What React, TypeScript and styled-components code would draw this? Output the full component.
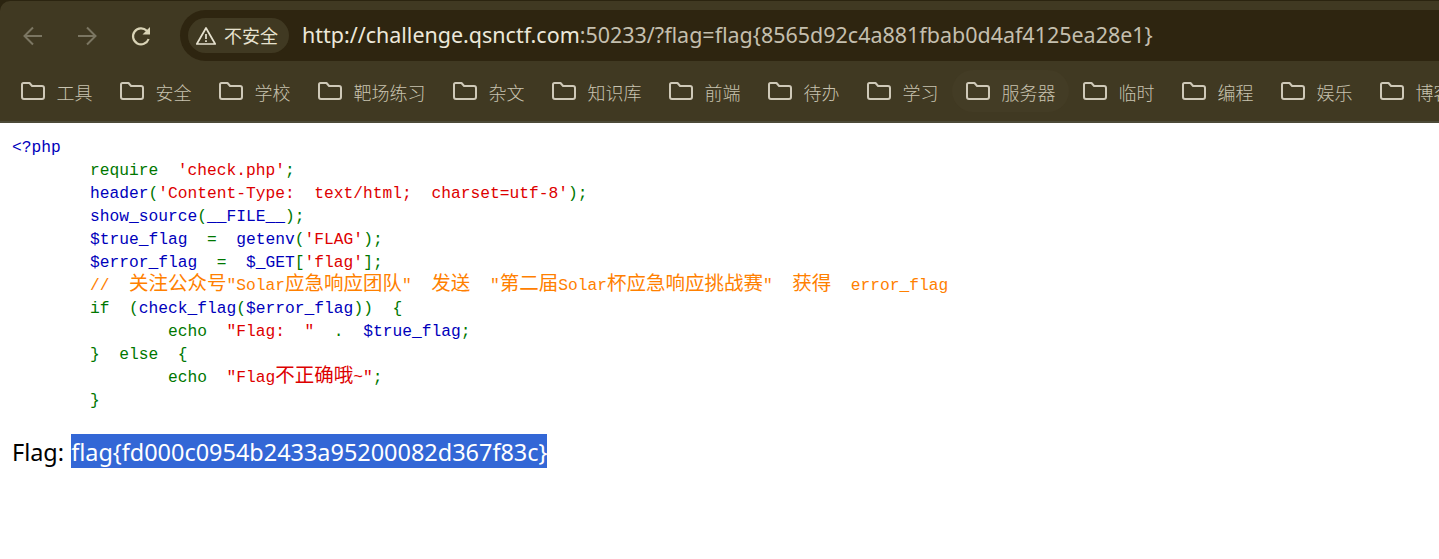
import React, { FC } from "react";
import styled, { createGlobalStyle } from "styled-components";

const GlobalStyle = createGlobalStyle`
  html, body {
    margin: 0;
    padding: 0;
    background: #ffffff;
    overflow: hidden;
  }
`;

const BOOKMARKS = [
  "工具",
  "安全",
  "学校",
  "靶场练习",
  "杂文",
  "知识库",
  "前端",
  "待办",
  "学习",
  "服务器",
  "临时",
  "编程",
  "娱乐",
  "博客",
];

const App: FC = () => {
  return (
    <>
      <GlobalStyle />
      <Page>
        <Chrome>
          <Toolbar>
            <NavButtons>
              <NavButton>
                <svg width="24" height="24" viewBox="0 0 24 24" fill="none" stroke="#7b7662" strokeWidth="2">
                  <path d="M21 12H4M12 3.5L3.5 12l8.5 8.5" />
                </svg>
              </NavButton>
              <NavButton>
                <svg width="24" height="24" viewBox="0 0 24 24" fill="none" stroke="#7b7662" strokeWidth="2">
                  <path d="M3 12h17M12 3.5l8.5 8.5-8.5 8.5" />
                </svg>
              </NavButton>
              <NavButton>
                <svg width="24" height="24" viewBox="0 0 24 24" fill="none" stroke="#d9d3b6">
                  <path d="M19.6 15a8 8 0 1 1-1.8-8.2L20 9" strokeWidth="2.2" />
                  <path d="M21 3v7.5h-7.5z" fill="#d9d3b6" stroke="none" />
                </svg>
              </NavButton>
            </NavButtons>
            <Omnibox>
              <SecurityChip>
                <svg width="22" height="22" viewBox="0 0 22 22" fill="none" stroke="#e6e1cf" strokeWidth="1.7">
                  <path d="M11 3L20.2 19H1.8L11 3Z" strokeLinejoin="round" />
                  <path d="M11 9v5M11 15.2v1.8" />
                </svg>
                <ChipLabel>不安全</ChipLabel>
              </SecurityChip>
              <Url>
                http://challenge.qsnctf.com
                <UrlPath>:50233/?flag=flag{"{"}8565d92c4a881fbab0d4af4125ea28e1{"}"}</UrlPath>
              </Url>
            </Omnibox>
          </Toolbar>
          <BookmarkBar>
            {BOOKMARKS.map((name) => (
              <Bookmark key={name} $hover={name === "服务器"}>
                <svg width="24" height="20" viewBox="0 0 24 20" fill="none" stroke="#cfc9b8" strokeWidth="2">
                  <path d="M1 3.5A1.5 1.5 0 0 1 2.5 2h6l2.6 3h9.9A2 2 0 0 1 23 7v9a2 2 0 0 1-2 2H3a2 2 0 0 1-2-2z" strokeLinejoin="round" />
                </svg>
                <BookmarkLabel>{name}</BookmarkLabel>
              </Bookmark>
            ))}
          </BookmarkBar>
        </Chrome>
        <Content>
          <Code>
            <CodeLine>
              <Tok $c="#0000bb">&lt;?php</Tok>
            </CodeLine>
            <CodeLine $indent={1}>
              <Tok $c="#007700">require{"\u00a0\u00a0"}</Tok>
              <Tok $c="#dd0000">'check.php'</Tok>
              <Tok $c="#007700">;</Tok>
            </CodeLine>
            <CodeLine $indent={1}>
              <Tok $c="#0000bb">header</Tok>
              <Tok $c="#007700">(</Tok>
              <Tok $c="#dd0000">'Content-Type:{"\u00a0\u00a0"}text/html;{"\u00a0\u00a0"}charset=utf-8'</Tok>
              <Tok $c="#007700">);</Tok>
            </CodeLine>
            <CodeLine $indent={1}>
              <Tok $c="#0000bb">show_source</Tok>
              <Tok $c="#007700">(</Tok>
              <Tok $c="#0000bb">__FILE__</Tok>
              <Tok $c="#007700">);</Tok>
            </CodeLine>
            <CodeLine $indent={1}>
              <Tok $c="#0000bb">$true_flag{"\u00a0\u00a0"}</Tok>
              <Tok $c="#007700">={"\u00a0\u00a0"}</Tok>
              <Tok $c="#0000bb">getenv</Tok>
              <Tok $c="#007700">(</Tok>
              <Tok $c="#dd0000">'FLAG'</Tok>
              <Tok $c="#007700">);</Tok>
            </CodeLine>
            <CodeLine $indent={1}>
              <Tok $c="#0000bb">$error_flag{"\u00a0\u00a0"}</Tok>
              <Tok $c="#007700">={"\u00a0\u00a0"}</Tok>
              <Tok $c="#0000bb">$_GET</Tok>
              <Tok $c="#007700">[</Tok>
              <Tok $c="#dd0000">'flag'</Tok>
              <Tok $c="#007700">];</Tok>
            </CodeLine>
            <CodeLine $indent={1}>
              <Tok $c="#ff8000">
                //{"\u00a0\u00a0"}<Cjk>关注公众号</Cjk>"Solar<Cjk>应急响应团队</Cjk>"{"\u00a0\u00a0"}<Cjk>发送</Cjk>
                {"\u00a0\u00a0"}"<Cjk>第二届</Cjk>Solar<Cjk>杯应急响应挑战赛</Cjk>"{"\u00a0\u00a0"}<Cjk>获得</Cjk>
                {"\u00a0\u00a0"}error_flag
              </Tok>
            </CodeLine>
            <CodeLine $indent={1}>
              <Tok $c="#007700">if{"\u00a0\u00a0"}(</Tok>
              <Tok $c="#0000bb">check_flag</Tok>
              <Tok $c="#007700">(</Tok>
              <Tok $c="#0000bb">$error_flag</Tok>
              <Tok $c="#007700">)){"\u00a0\u00a0"}{"{"}</Tok>
            </CodeLine>
            <CodeLine $indent={2}>
              <Tok $c="#007700">echo{"\u00a0\u00a0"}</Tok>
              <Tok $c="#dd0000">"Flag:{"\u00a0\u00a0"}"{"\u00a0\u00a0"}</Tok>
              <Tok $c="#007700">.{"\u00a0\u00a0"}</Tok>
              <Tok $c="#0000bb">$true_flag</Tok>
              <Tok $c="#007700">;</Tok>
            </CodeLine>
            <CodeLine $indent={1}>
              <Tok $c="#007700">{"}"}{"\u00a0\u00a0"}else{"\u00a0\u00a0"}{"{"}</Tok>
            </CodeLine>
            <CodeLine $indent={2}>
              <Tok $c="#007700">echo{"\u00a0\u00a0"}</Tok>
              <Tok $c="#dd0000">"Flag<Cjk>不正确哦</Cjk>~"</Tok>
              <Tok $c="#007700">;</Tok>
            </CodeLine>
            <CodeLine $indent={1}>
              <Tok $c="#007700">{"}"}</Tok>
            </CodeLine>
          </Code>
          <FlagLine>
            Flag: <Selected>flag{"{"}fd000c0954b2433a95200082d367f83c{"}"}</Selected>
          </FlagLine>
        </Content>
      </Page>
    </>
  );
};

export default App;

const Page = styled.div`
  width: 1439px;
  height: 559px;
  display: flex;
  flex-direction: column;
  background: #ffffff;
  overflow: hidden;
`;

const Chrome = styled.header`
  height: 123px;
  box-sizing: border-box;
  background: #2b2410;
  padding-top: 1px;
  display: flex;
  flex-direction: column;
`;

const Toolbar = styled.div`
  height: 60px;
  box-sizing: border-box;
  padding: 9px 0 0 6px;
  display: flex;
  align-items: flex-start;
  background: #403922;
  border-radius: 10px 0 0 0;
`;

const NavButtons = styled.div`
  display: flex;
  margin-right: 12px;
`;

const NavButton = styled.div`
  width: 54px;
  height: 51px;
  display: flex;
  align-items: center;
  justify-content: center;
`;

const Omnibox = styled.div`
  flex: 1;
  height: 51px;
  box-sizing: border-box;
  background: #2e2510;
  border-radius: 26px 0 0 26px;
  padding: 8px 0 0 8px;
  display: flex;
  align-items: flex-start;
  gap: 13px;
`;

const SecurityChip = styled.div`
  width: 101px;
  height: 35px;
  box-sizing: border-box;
  background: #403922;
  border-radius: 18px;
  padding-left: 7px;
  display: flex;
  align-items: center;
  gap: 7px;
`;

const ChipLabel = styled.span`
  font: 400 18px/35px "Noto Sans CJK SC", sans-serif;
  color: #e6e1cf;
`;

const Url = styled.div`
  font: 400 21.47px/33px "Noto Sans", sans-serif;
  color: #ece8da;
  white-space: nowrap;
`;

const UrlPath = styled.span`
  color: #c4bfae;
`;

const BookmarkBar = styled.nav`
  height: 62px;
  box-sizing: border-box;
  background: #403922;
  border-bottom: 2px solid #4c4a38;
  display: flex;
  align-items: center;
  padding-left: 7px;
  white-space: nowrap;
`;

const Bookmark = styled.div<{ $hover?: boolean }>`
  height: 42px;
  padding: 0 13.5px;
  display: flex;
  align-items: center;
  gap: 12px;
  flex: none;
  border-radius: 21px;
  background: ${(p) => (p.$hover ? "#433c25" : "transparent")};
`;

const BookmarkLabel = styled.span`
  font: 300 18px/24px "Noto Sans CJK SC", sans-serif;
  color: #c8c3b0;
  padding-top: 2px;
`;

const Content = styled.main`
  flex: 1;
  padding: 13px 12px 0;
`;

const Code = styled.code`
  display: block;
  font: 400 16.25px/23px "Liberation Mono", monospace;
`;

const CodeLine = styled.div<{ $indent?: number }>`
  height: 23px;
  padding-left: ${(p) => (p.$indent || 0) * 78}px;
  white-space: nowrap;
`;

const Tok = styled.span<{ $c: string }>`
  color: ${(p) => p.$c};
`;

const Cjk = styled.span`
  font: 400 19.5px/0 "Noto Sans CJK SC", sans-serif;
`;

const FlagLine = styled.div`
  margin-top: 22px;
  font: 400 23.45px/36px "Noto Sans", sans-serif;
  color: #000000;
  white-space: nowrap;
`;

const Selected = styled.span`
  display: inline-block;
  height: 34px;
  margin-left: 1px;
  background: #3367d6;
  color: #ffffff;
`;
